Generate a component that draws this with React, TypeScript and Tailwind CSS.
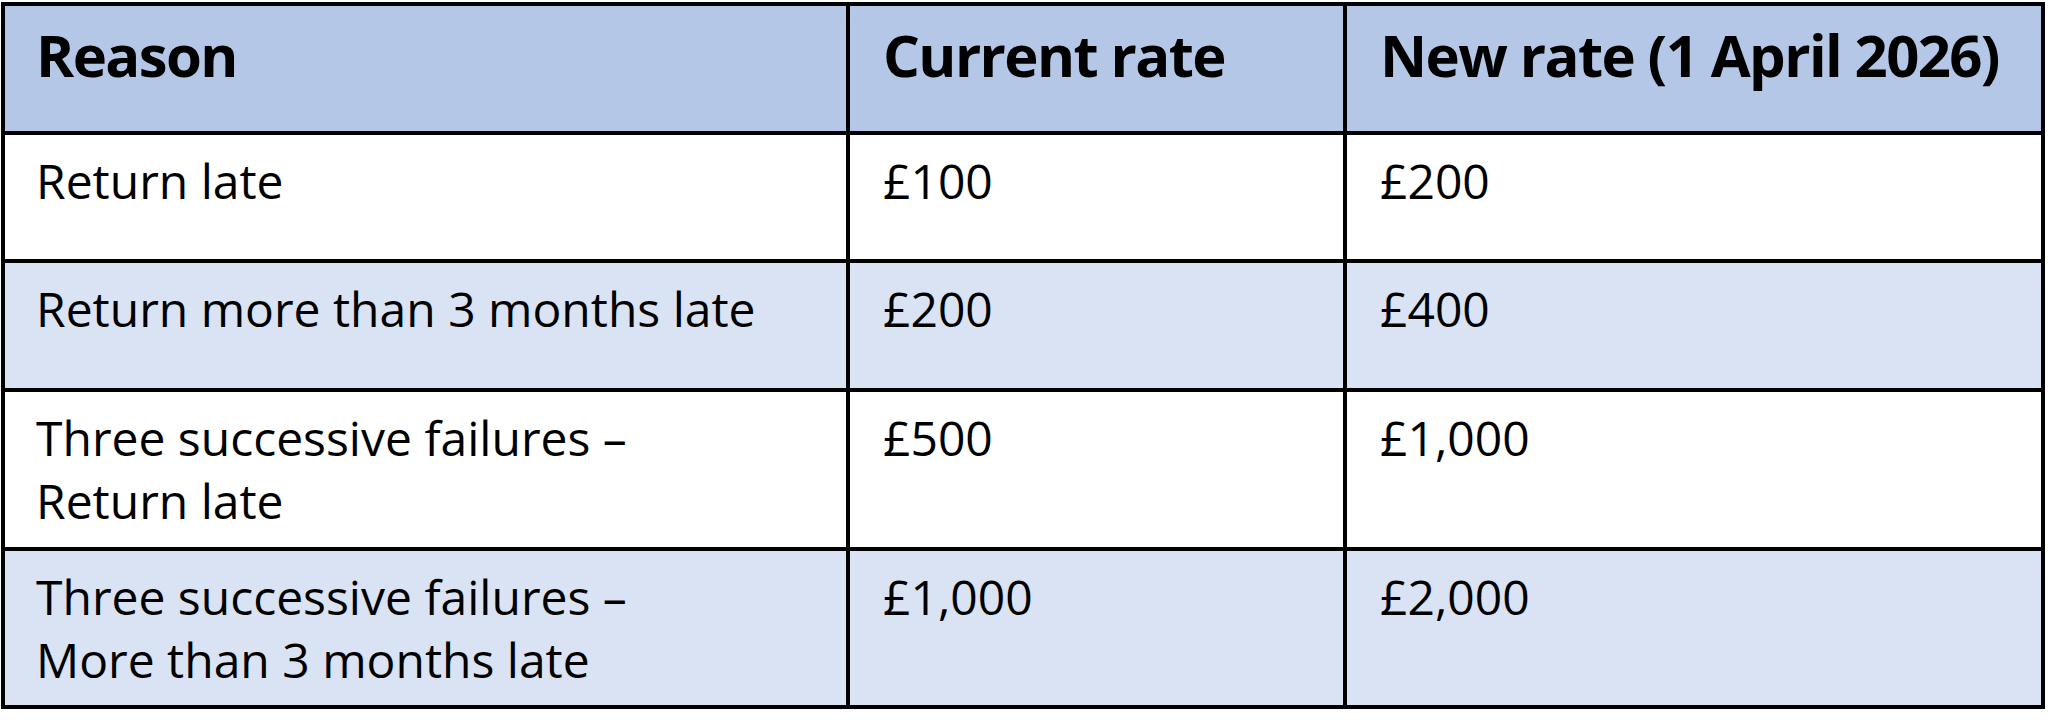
const headers = ['Reason', 'Current rate', 'New rate (1 April 2026)'];

const rows: { reason: string[]; current: string; next: string; height: string }[] = [
  { reason: ['Return late'], current: '£100', next: '£200', height: 'h-[124px]' },
  { reason: ['Return more than 3 months late'], current: '£200', next: '£400', height: 'h-[125px]' },
  { reason: ['Three successive failures –', 'Return late'], current: '£500', next: '£1,000', height: 'h-[155px]' },
  {
    reason: ['Three successive failures –', 'More than 3 months late'],
    current: '£1,000',
    next: '£2,000',
    height: 'h-[154px]',
  },
];

export default function App() {
  return (
    <div className="min-h-screen bg-white pl-px pt-[2px] font-['Open_Sans',sans-serif] text-black">
      <div className="grid w-[2044px] grid-cols-[841px_493px_694px] gap-[4px] bg-black p-[4px]">
        {headers.map((h, j) => (
          <div
            key={h}
            className={`h-[125px] bg-[#b4c7e7] ${j === 0 ? 'pl-[31px]' : 'pl-[33px]'} pt-[14px] text-[58px] leading-[70px] font-bold tracking-[-1.6px]`}
          >
            {h}
          </div>
        ))}
        {rows.map((r, i) => {
          const bg = i % 2 === 0 ? 'bg-white' : 'bg-[#dae3f3]';
          return [r.reason, [r.current], [r.next]].map((lines, j) => (
            <div
              key={`${i}-${j}`}
              className={`${r.height} ${bg} ${j === 0 ? 'pl-[31px]' : 'pl-[33px]'} pt-[14px] text-[48px] leading-[63px]`}
            >
              {lines.map((l) => (
                <div key={l}>{l}</div>
              ))}
            </div>
          ));
        })}
      </div>
    </div>
  );
}
